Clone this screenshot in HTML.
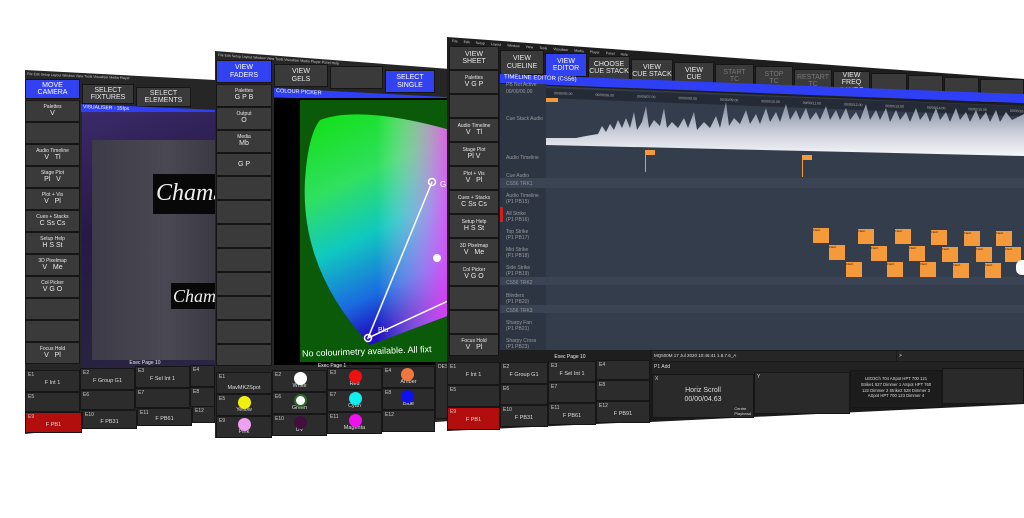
<!DOCTYPE html>
<html><head><meta charset="utf-8"><style>
*{margin:0;padding:0;box-sizing:border-box}
body{width:1024px;height:518px;background:#fff;position:relative;overflow:hidden;font-family:"Liberation Sans",sans-serif;color:#ddd}
.a{position:absolute}
.b{position:absolute;background:#3a3a3a;border:1px solid #151515;font-size:7px;text-align:center;color:#e8e8e8;line-height:1.05;display:flex;align-items:center;justify-content:center;flex-direction:column}
.blue{background:#3342f0;color:#fff}
.l{position:absolute;font-size:5px;color:#999}
.t{font-size:6px;color:#eee;position:absolute;text-align:center}
.cell{position:absolute;background:#2c2c2c;border:1px solid #161616;font-size:5px;color:#ddd}
.cell i{position:absolute;left:2px;top:1px;font-style:normal;font-size:5px;color:#ccc}
.cell span{position:absolute;left:0;right:0;top:45%;text-align:center;font-size:5.5px}
.dot{position:absolute;width:13px;height:13px;border-radius:50%}
.fl{position:absolute;width:16px;height:15px;background:#f59a3a;font-size:3px;color:#421}
</style></head><body>

<!-- SCREEN 1 -->
<div class="a" style="left:25px;top:70px;width:190px;height:365px;background:#262626;clip-path:polygon(0 0,100% 10px,100% 343px,0 364px)"></div>
<div class="a" style="left:27px;top:72px;width:190px;height:6px;font-size:3.5px;color:#ccc;transform:skewY(2.4deg);transform-origin:left">File Edit Setup Layout Window View Tools Visualiser Media Player</div>
<div class="b blue" style="left:25px;top:79px;width:55px;height:20px;font-size:7px">MOVE<br>CAMERA</div>
<div class="b" style="left:82px;top:84px;width:52px;height:20px">SELECT<br>FIXTURES</div>
<div class="b" style="left:136px;top:87px;width:55px;height:20px">SELECT<br>ELEMENTS</div>
<div class="a" style="left:81px;top:104px;width:134px;height:8px;background:#2f3ff5;font-size:5px;color:#fff;padding-left:2px;transform:skewY(2.5deg);transform-origin:left">VISUALISER - 35fps</div>
<div class="a" style="left:82px;top:112px;width:133px;height:263px;background:linear-gradient(160deg,#3b2a6a,#251a44 40%,#2a2640)"></div>
<div class="a" style="left:92px;top:140px;width:123px;height:220px;background:linear-gradient(90deg,#3d3b47,#4a4852 60%,#3b3a44)"></div>
<div class="a" style="left:153px;top:174px;width:62px;height:40px;background:#080808;font-family:'Liberation Serif',serif;font-style:italic;font-size:24px;line-height:38px;color:#eee;overflow:hidden;padding-left:3px">ChamS</div>
<div class="a" style="left:171px;top:283px;width:44px;height:26px;background:#080808;font-family:'Liberation Serif',serif;font-style:italic;font-size:18px;line-height:26px;color:#eee;overflow:hidden;padding-left:2px">Cham</div>
<div class="b" style="left:25px;top:100px;width:55px;height:22px"><span style="font-size:5px">Palettes</span><span>V</span></div>
<div class="b" style="left:25px;top:122px;width:55px;height:22px"></div>
<div class="b" style="left:25px;top:144px;width:55px;height:22px"><span style="font-size:5px">Audio Timeline</span><span>V &nbsp; Tl</span></div>
<div class="b" style="left:25px;top:166px;width:55px;height:22px"><span style="font-size:5px">Stage Plot</span><span>Pl &nbsp; V</span></div>
<div class="b" style="left:25px;top:188px;width:55px;height:22px"><span style="font-size:5px">Plot + Vis</span><span>V &nbsp; Pl</span></div>
<div class="b" style="left:25px;top:210px;width:55px;height:22px"><span style="font-size:5px">Cues + Stacks</span><span>C Ss Cs</span></div>
<div class="b" style="left:25px;top:232px;width:55px;height:22px"><span style="font-size:5px">Setup Help</span><span>H S St</span></div>
<div class="b" style="left:25px;top:254px;width:55px;height:22px"><span style="font-size:5px">3D Pixelmap</span><span>V &nbsp; Me</span></div>
<div class="b" style="left:25px;top:276px;width:55px;height:22px"><span style="font-size:5px">Col Picker</span><span>V G O</span></div>
<div class="b" style="left:25px;top:298px;width:55px;height:22px"></div>
<div class="b" style="left:25px;top:320px;width:55px;height:22px"></div>
<div class="b" style="left:25px;top:342px;width:55px;height:22px"><span style="font-size:5px">Focus Hold</span><span>V &nbsp; Pl</span></div>
<div class="t" style="left:80px;top:360px;width:130px;font-size:5px">Exec Page 10</div>
<div class="cell" style="left:25px;top:370px;width:55px;height:22px"><i>E1</i><span>F Int 1</span></div>
<div class="cell" style="left:80px;top:368px;width:55px;height:22px"><i>E2</i><span>F Group G1</span></div>
<div class="cell" style="left:135px;top:366px;width:55px;height:22px"><i>E3</i><span>F Sel Int 1</span></div>
<div class="cell" style="left:190px;top:365px;width:25px;height:22px"><i>E4</i></div>
<div class="cell" style="left:25px;top:392px;width:55px;height:20px"><i>E5</i></div>
<div class="cell" style="left:80px;top:390px;width:55px;height:20px"><i>E6</i></div>
<div class="cell" style="left:135px;top:388px;width:55px;height:20px"><i>E7</i></div>
<div class="cell" style="left:190px;top:387px;width:25px;height:20px"><i>E8</i></div>
<div class="cell" style="left:25px;top:412px;width:57px;height:21px;background:#b30e0e"><i>E9</i><span>F PB1</span></div>
<div class="cell" style="left:82px;top:410px;width:55px;height:19px"><i>E10</i><span>F PB31</span></div>
<div class="cell" style="left:137px;top:408px;width:55px;height:18px"><i>E11</i><span>F PB61</span></div>
<div class="cell" style="left:192px;top:406px;width:23px;height:17px"><i>E12</i></div>

<!-- SCREEN 2 -->
<div class="a" style="left:215px;top:51px;width:235px;height:388px;background:#262626;clip-path:polygon(0 0,100% 18px,100% 370px,0 387px)"></div>
<div class="a" style="left:218px;top:53px;width:232px;height:6px;font-size:3.5px;color:#ccc;transform:skewY(4deg);transform-origin:left">File Edit Setup Layout Window View Tools Visualiser Media Player Panel Help</div>
<div class="b blue" style="left:216px;top:60px;width:56px;height:23px">VIEW<br>FADERS</div>
<div class="b" style="left:274px;top:64px;width:54px;height:23px">VIEW<br>GELS</div>
<div class="b" style="left:330px;top:66px;width:53px;height:23px"></div>
<div class="b blue" style="left:385px;top:70px;width:50px;height:23px">SELECT<br>SINGLE</div>
<div class="a" style="left:274px;top:88px;width:176px;height:9px;background:#2f3ff5;font-size:5.5px;color:#fff;padding-left:2px;transform:skewY(3deg);transform-origin:left">COLOUR PICKER</div>
<div class="a" style="left:274px;top:98px;width:176px;height:267px;background:#000"></div>
<svg class="a" style="left:300px;top:100px" width="150" height="262">
<defs>
<linearGradient id="g1" x1="0" y1="0" x2="0.3" y2="1"><stop offset="0" stop-color="#10e010"/><stop offset="0.35" stop-color="#30e060"/><stop offset="0.6" stop-color="#10c8c0"/><stop offset="0.85" stop-color="#1a6ae0"/><stop offset="1" stop-color="#2010c0"/></linearGradient>
<linearGradient id="g2" x1="0" y1="0" x2="1" y2="0"><stop offset="0.5" stop-color="#fff" stop-opacity="0"/><stop offset="1" stop-color="#ff40ff" stop-opacity="0.85"/></linearGradient>
</defs>
<rect x="0" y="0" width="150" height="262" fill="#0a5a0a"/>
<path d="M20 20 Q60 5 150 30 L150 215 L70 245 Q0 170 5 80 Q8 35 20 20Z" fill="url(#g1)"/>
<path d="M20 20 Q60 5 150 30 L150 215 L70 245 Q0 170 5 80 Q8 35 20 20Z" fill="url(#g2)"/>
<path d="M132 82 L68 238 L150 200" stroke="#fff" stroke-width="1.5" fill="none"/>
<circle cx="132" cy="82" r="3.5" fill="none" stroke="#fff" stroke-width="1.5"/>
<circle cx="68" cy="238" r="3.5" fill="none" stroke="#fff" stroke-width="1.5"/>
<circle cx="137" cy="158" r="4" fill="#fff"/>
<text x="140" y="87" font-size="8" fill="#fff" font-family="Liberation Sans">G</text>
<text x="78" y="232" font-size="7" fill="#fff" font-family="Liberation Sans">Blu</text>
</svg>
<div class="a" style="left:302px;top:346px;width:148px;font-size:9px;color:#fff;white-space:nowrap;overflow:hidden;transform:rotate(-2deg)">No colourimetry available. All fixt</div>
<div class="b" style="left:216px;top:84px;width:56px;height:23px"><span style="font-size:5px">Palettes</span><span>G P B</span></div>
<div class="b" style="left:216px;top:107px;width:56px;height:23px"><span style="font-size:5px">Output</span><span>O</span></div>
<div class="b" style="left:216px;top:130px;width:56px;height:23px"><span style="font-size:5px">Media</span><span>Mb</span></div>
<div class="b" style="left:216px;top:153px;width:56px;height:23px"><span>G P</span></div>
<div class="b" style="left:216px;top:176px;width:56px;height:24px"></div>
<div class="b" style="left:216px;top:200px;width:56px;height:24px"></div>
<div class="b" style="left:216px;top:224px;width:56px;height:24px"></div>
<div class="b" style="left:216px;top:248px;width:56px;height:24px"></div>
<div class="b" style="left:216px;top:272px;width:56px;height:24px"></div>
<div class="b" style="left:216px;top:296px;width:56px;height:24px"></div>
<div class="b" style="left:216px;top:320px;width:56px;height:24px"></div>
<div class="b" style="left:216px;top:344px;width:56px;height:22px"></div>
<div class="t" style="left:272px;top:363px;width:120px;font-size:5px">Exec Page 1</div>
<div class="cell" style="left:216px;top:372px;width:56px;height:22px"><i>E1</i><span style="top:60%">MavMK2Spot</span></div>
<div class="cell" style="left:272px;top:370px;width:55px;height:22px"><i>E2</i><span style="top:62%">White</span></div>
<div class="cell" style="left:327px;top:368px;width:55px;height:22px"><i>E3</i><span style="top:62%">Red</span></div>
<div class="cell" style="left:382px;top:366px;width:53px;height:22px"><i>E4</i><span style="top:62%">Amber</span></div>
<div class="cell" style="left:216px;top:394px;width:56px;height:22px"><i>E5</i><span style="top:62%">Yellow</span></div>
<div class="cell" style="left:272px;top:392px;width:55px;height:22px"><i>E6</i><span style="top:62%">Green</span></div>
<div class="cell" style="left:327px;top:390px;width:55px;height:22px"><i>E7</i><span style="top:62%">Cyan</span></div>
<div class="cell" style="left:382px;top:388px;width:53px;height:22px"><i>E8</i><span style="top:62%">Blue</span></div>
<div class="cell" style="left:216px;top:416px;width:56px;height:22px"><i>E9</i><span style="top:62%">Pink</span></div>
<div class="cell" style="left:272px;top:414px;width:55px;height:22px"><i>E10</i><span style="top:62%">UV</span></div>
<div class="cell" style="left:327px;top:412px;width:55px;height:22px"><i>E11</i><span style="top:62%">Magenta</span></div>
<div class="cell" style="left:382px;top:410px;width:53px;height:22px"><i>E12</i></div>
<div class="dot" style="left:294px;top:372px;background:#fff"></div>
<div class="dot" style="left:349px;top:370px;background:#f01010"></div>
<div class="dot" style="left:401px;top:368px;background:#f07840"></div>
<div class="dot" style="left:238px;top:396px;background:#f0f010"></div>
<div class="dot" style="left:294px;top:394px;background:#fff;border:2px solid #2a6a2a"></div>
<div class="dot" style="left:349px;top:392px;background:#10f0f0"></div>
<div class="dot" style="left:401px;top:390px;background:#1010f0"></div>
<div class="dot" style="left:238px;top:418px;background:#f0a0f0"></div>
<div class="dot" style="left:294px;top:416px;background:#40103a"></div>
<div class="dot" style="left:349px;top:414px;background:#f010f0"></div>
<div class="cell" style="left:435px;top:362px;width:15px;height:57px"><i>DES</i></div>

<!-- SCREEN 3 -->
<div class="a" style="left:447px;top:37px;width:577px;height:395px;background:#1e1e1e;clip-path:polygon(0 0,100% 42px,100% 360px,300px 380px,0 394px)"></div>
<div class="a" style="left:452px;top:39px;width:400px;height:6px;font-size:3.5px;color:#ccc;transform:skewY(4.5deg);transform-origin:left;word-spacing:5px">File Edit Setup Layout Window View Tools Visualiser Media Player Panel Help</div>
<div class="b" style="left:449px;top:46px;width:50px;height:24px">VIEW<br>SHEET</div>
<div class="b" style="left:500px;top:50px;width:44px;height:25px">VIEW<br>CUELINE</div>
<div class="b blue" style="left:545px;top:53px;width:42px;height:24px">VIEW<br>EDITOR</div>
<div class="b" style="left:588px;top:56px;width:42px;height:24px">CHOOSE<br>CUE STACK</div>
<div class="b" style="left:631px;top:59px;width:42px;height:24px">VIEW<br>CUE STACK</div>
<div class="b" style="left:674px;top:62px;width:40px;height:24px">VIEW<br>CUE</div>
<div class="b" style="left:715px;top:64px;width:39px;height:24px;color:#777">START<br>TC</div>
<div class="b" style="left:755px;top:66px;width:38px;height:24px;color:#777">STOP<br>TC</div>
<div class="b" style="left:794px;top:69px;width:38px;height:24px;color:#777">RESTART<br>TC</div>
<div class="b" style="left:833px;top:71px;width:37px;height:24px">VIEW<br>FREQ BANDS</div>
<div class="b" style="left:871px;top:73px;width:36px;height:24px"></div>
<div class="b" style="left:908px;top:75px;width:35px;height:24px"></div>
<div class="b" style="left:944px;top:77px;width:35px;height:24px"></div>
<div class="b" style="left:980px;top:79px;width:44px;height:24px"></div>
<div class="a" style="left:500px;top:74px;width:524px;height:9px;background:#2f3ff5;font-size:6px;color:#fff;padding-left:4px;transform:skewY(2.2deg);transform-origin:left">TIMELINE EDITOR (CS56)</div>
<!-- timeline area -->
<div class="a" style="left:500px;top:84px;width:524px;height:266px;background:#343d4c;clip-path:polygon(0 0,100% 22px,100% 100%,0 100%)"></div>
<div class="a" style="left:500px;top:84px;width:46px;height:266px;background:#2d3543"></div>
<div class="a" style="left:546px;top:88px;width:478px;height:10px;background:#252b36;transform:skewY(2.2deg);transform-origin:left;font-size:3.5px;color:#aaa;word-spacing:22px;padding:3px 0 0 8px;white-space:nowrap;overflow:hidden">00/00/05.00 00/00/06.00 00/00/07.00 00/00/08.00 00/00/09.00 00/00/10.00 00/00/11.00 00/00/12.00 00/00/13.00 00/00/14.00 00/00/15.00 00/00/16.00</div>
<svg class="a" style="left:546px;top:98px" width="478" height="60">
<defs><linearGradient id="w" x1="0" y1="0" x2="0" y2="1"><stop offset="0" stop-color="#7d879b"/><stop offset="0.55" stop-color="#c9cdd8"/><stop offset="1" stop-color="#f6f7f9"/></linearGradient></defs>
<path d="M0 40 L30 40 L40 38 L52 36 L56 28 L60 34 L64 26 L68 32 L72 22 L76 30 L80 20 L84 30 L88 14 L91 32 L96 24 L100 8 L103 30 L108 22 L114 28 L118 10 L121 30 L126 24 L132 30 L138 20 L142 30 L148 14 L151 32 L158 24 L164 30 L170 18 L174 30 L180 4 L183 28 L188 20 L194 26 L200 12 L204 26 L210 16 L214 26 L220 10 L224 24 L230 14 L234 24 L240 6 L244 22 L250 12 L254 22 L260 10 L264 22 L270 14 L274 22 L280 8 L284 22 L290 12 L294 22 L300 10 L304 22 L310 14 L314 22 L320 6 L324 22 L330 12 L334 22 L340 10 L344 24 L350 12 L354 22 L360 14 L364 24 L370 10 L374 22 L380 14 L384 24 L390 10 L394 22 L400 14 L404 24 L410 10 L414 22 L420 14 L424 24 L430 12 L434 22 L440 14 L444 24 L450 12 L454 24 L460 14 L466 22 L478 16 L478 58 L0 47Z" fill="url(#w)"/>
</svg>
<div class="a" style="left:546px;top:98px;width:12px;height:4px;background:#f59a3a"></div>
<div class="a" style="left:645px;top:152px;width:1px;height:20px;background:#f59a3a"></div>
<div class="a" style="left:645px;top:150px;width:10px;height:5px;background:#f59a3a"></div>
<div class="a" style="left:802px;top:157px;width:1px;height:20px;background:#f59a3a"></div>
<div class="a" style="left:802px;top:155px;width:10px;height:5px;background:#f59a3a"></div>
<div class="a" style="left:500px;top:178px;width:524px;height:10px;background:#3a4454"></div>
<div class="a" style="left:500px;top:277px;width:524px;height:8px;background:#3a4454"></div>
<div class="a" style="left:500px;top:305px;width:524px;height:8px;background:#3a4454"></div>
<div class="a" style="left:500px;top:207px;width:3px;height:15px;background:#d02020"></div>
<div class="l" style="left:506px;top:82px;line-height:1.4">PB Not Active<br>00/00/00.00</div>
<div class="l" style="left:506px;top:116px">Cue Stack Audio</div>
<div class="l" style="left:506px;top:155px">Audio Timeline</div>
<div class="l" style="left:506px;top:173px">Cue Audio</div>
<div class="l" style="left:506px;top:181px">CS56 TRK1</div>
<div class="l" style="left:506px;top:193px">Audio Timeline<br>(P1 PB15)</div>
<div class="l" style="left:506px;top:211px">All Strike<br>(P1 PB16)</div>
<div class="l" style="left:506px;top:229px">Top Strike<br>(P1 PB17)</div>
<div class="l" style="left:506px;top:247px">Mid Strike<br>(P1 PB18)</div>
<div class="l" style="left:506px;top:265px">Side Strike<br>(P1 PB19)</div>
<div class="l" style="left:506px;top:280px">CS56 TRK2</div>
<div class="l" style="left:506px;top:293px">Blinders<br>(P1 PB20)</div>
<div class="l" style="left:506px;top:308px">CS56 TRK3</div>
<div class="l" style="left:506px;top:320px">Sharpy Fan<br>(P1 PB21)</div>
<div class="l" style="left:506px;top:338px">Sharpy Cross<br>(P1 PB23)</div>
<!-- flash blocks -->
<div class="fl" style="left:813px;top:228px">Flash</div><div class="fl" style="left:858px;top:229px">Flash</div><div class="fl" style="left:895px;top:229px">Flash</div><div class="fl" style="left:931px;top:230px">Flash</div><div class="fl" style="left:964px;top:231px">Flash</div><div class="fl" style="left:996px;top:231px">Flash</div>
<div class="fl" style="left:829px;top:245px">Flash</div><div class="fl" style="left:871px;top:246px">Flash</div><div class="fl" style="left:909px;top:246px">Flash</div><div class="fl" style="left:942px;top:247px">Flash</div><div class="fl" style="left:976px;top:247px">Flash</div><div class="fl" style="left:1005px;top:247px">Flash</div>
<div class="fl" style="left:846px;top:262px">Flash</div><div class="fl" style="left:887px;top:262px">Flash</div><div class="fl" style="left:920px;top:262px">Flash</div><div class="fl" style="left:953px;top:263px">Flash</div><div class="fl" style="left:985px;top:263px">Flash</div><div class="fl" style="left:1016px;top:260px;background:#fff;border-radius:6px">x</div>
<!-- left column -->
<div class="b" style="left:449px;top:70px;width:50px;height:24px"><span style="font-size:5px">Palettes</span><span>V G P</span></div>
<div class="b" style="left:449px;top:94px;width:50px;height:24px"></div>
<div class="b" style="left:449px;top:118px;width:50px;height:24px"><span style="font-size:5px">Audio Timeline</span><span>V &nbsp; Tl</span></div>
<div class="b" style="left:449px;top:142px;width:50px;height:24px"><span style="font-size:5px">Stage Plot</span><span>Pl V</span></div>
<div class="b" style="left:449px;top:166px;width:50px;height:24px"><span style="font-size:5px">Plot + Vis</span><span>V &nbsp; Pl</span></div>
<div class="b" style="left:449px;top:190px;width:50px;height:24px"><span style="font-size:5px">Cues + Stacks</span><span>C Ss Cs</span></div>
<div class="b" style="left:449px;top:214px;width:50px;height:24px"><span style="font-size:5px">Setup Help</span><span>H S St</span></div>
<div class="b" style="left:449px;top:238px;width:50px;height:24px"><span style="font-size:5px">3D Pixelmap</span><span>V &nbsp; Me</span></div>
<div class="b" style="left:449px;top:262px;width:50px;height:24px"><span style="font-size:5px">Col Picker</span><span>V G O</span></div>
<div class="b" style="left:449px;top:286px;width:50px;height:24px"></div>
<div class="b" style="left:449px;top:310px;width:50px;height:24px"></div>
<div class="b" style="left:449px;top:334px;width:50px;height:22px"><span style="font-size:5px">Focus Hold</span><span>V &nbsp; Pl</span></div>
<div class="t" style="left:500px;top:354px;width:140px;font-size:5px">Exec Page 10</div>
<div class="cell" style="left:447px;top:362px;width:53px;height:23px"><i>E1</i><span>F Int 1</span></div>
<div class="cell" style="left:500px;top:362px;width:48px;height:22px"><i>E2</i><span>F Group G1</span></div>
<div class="cell" style="left:548px;top:361px;width:48px;height:21px"><i>E3</i><span>F Sel Int 1</span></div>
<div class="cell" style="left:596px;top:360px;width:54px;height:20px"><i>E4</i></div>
<div class="cell" style="left:447px;top:385px;width:53px;height:22px"><i>E5</i></div>
<div class="cell" style="left:500px;top:384px;width:48px;height:21px"><i>E6</i></div>
<div class="cell" style="left:548px;top:382px;width:48px;height:21px"><i>E7</i></div>
<div class="cell" style="left:596px;top:380px;width:54px;height:21px"><i>E8</i></div>
<div class="cell" style="left:447px;top:407px;width:53px;height:23px;background:#b30e0e"><i>E9</i><span>F PB1</span></div>
<div class="cell" style="left:500px;top:405px;width:48px;height:22px"><i>E10</i><span>F PB31</span></div>
<div class="cell" style="left:548px;top:403px;width:48px;height:22px"><i>E11</i><span>F PB61</span></div>
<div class="cell" style="left:596px;top:401px;width:54px;height:22px"><i>E12</i><span>F PB91</span></div>
<!-- command area -->
<div class="a" style="left:650px;top:350px;width:374px;height:72px;background:#1a1a1a;clip-path:polygon(0 0,100% 0,100% 75%,0 100%)"></div>
<div class="a" style="left:652px;top:351px;width:244px;height:10px;background:#262626;font-size:4.5px;color:#ddd;padding:2px">MQ500M 17 Jul 2020 10:46:41 1.8.7.6_A</div>
<div class="a" style="left:897px;top:351px;width:127px;height:10px;background:#262626;font-size:5px;padding:2px">&gt;</div>
<div class="a" style="left:652px;top:362px;width:372px;height:12px;background:#222;font-size:5px;padding:2px">P1 Add</div>
<div class="cell" style="left:652px;top:374px;width:102px;height:44px;background:#2a2a2a"><i>X</i><span style="top:25%;font-size:7px;line-height:1.3">Horiz Scroll<br>00/00/04.63</span><b style="position:absolute;right:2px;bottom:1px;font-size:4px;font-weight:normal">Centre<br>Playhead</b></div>
<div class="cell" style="left:754px;top:372px;width:96px;height:42px;background:#2a2a2a"><i>Y</i></div>
<div class="cell" style="left:850px;top:370px;width:92px;height:38px;background:#1c1c1c"><span style="top:15%;font-size:4.2px;line-height:1.35">LED3Ch 704 ASpot HPT 700 121<br>Strike1 527 Dimmer 1 ASpot HPT 760<br>122 Dimmer 2 Strike2 528 Dimmer 3<br>ASpot HPT 700 123 Dimmer 4</span></div>
<div class="cell" style="left:942px;top:368px;width:82px;height:36px;background:#2a2a2a"></div>
</body></html>
